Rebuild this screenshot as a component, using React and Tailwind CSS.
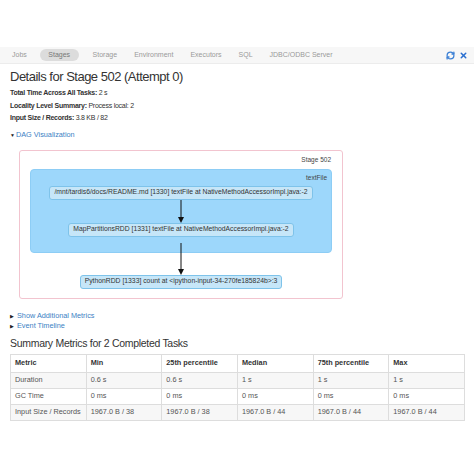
import { RefreshCw, X } from 'lucide-react';

const TABS = ['Jobs', 'Stages', 'Storage', 'Environment', 'Executors', 'SQL', 'JDBC/ODBC Server'];

const ROWS = [
  ['Duration', '0.6 s', '0.6 s', '1 s', '1 s', '1 s'],
  ['GC Time', '0 ms', '0 ms', '0 ms', '0 ms', '0 ms'],
  ['Input Size / Records', '1967.0 B / 38', '1967.0 B / 38', '1967.0 B / 44', '1967.0 B / 44', '1967.0 B / 44'],
];

const HEADERS = ['Metric', 'Min', '25th percentile', 'Median', '75th percentile', 'Max'];

function Arrow({ h }) {
  return (
    <svg width="8" height={h} className="block">
      <line x1="4" y1="0" x2="4" y2={h - 5} stroke="#111" strokeWidth="1" />
      <polygon points={`1,${h - 6} 7,${h - 6} 4,${h}`} fill="#111" />
    </svg>
  );
}

function Node({ children }) {
  return (
    <div className="h-[14px] px-[4px] flex items-center rounded-[3px] border border-[#7ec3ea] bg-[#c6e6f8] text-[6.8px] text-[#333] whitespace-nowrap">
      {children}
    </div>
  );
}

export default function App() {
  return (
    <div className="w-[474px] h-[474px] bg-white pt-[47px] text-[#333]" style={{ fontFamily: '"Liberation Sans", Arial, sans-serif' }}>
      <div className="h-[17px] bg-[#f7f7f7] border-b border-[#ececec] flex items-center pl-[12px] pr-[6px] text-[7px] text-[#9a9a9a]">
        {TABS.map((t) => (
          <span
            key={t}
            className={
              t === 'Stages'
                ? 'mr-[14px] px-[8.5px] py-[1px] rounded-full bg-[#dcdcdc] text-[#777]'
                : t === 'Jobs'
                ? 'mr-[13px]'
                : 'mr-[17px]'
            }
          >
            {t}
          </span>
        ))}
        <div className="ml-auto flex items-center gap-[4px]">
          <RefreshCw size={9} strokeWidth={3.5} color="#3a7fd5" />
          <X size={9} strokeWidth={4} color="#2a6fd0" />
        </div>
      </div>

      <div className="px-[10px]">
        <h3 className="mt-[4px] text-[13px] leading-[18px] tracking-[-0.5px] font-light text-[#333]">Details for Stage 502 (Attempt 0)</h3>
        <div className="mt-[1px] text-[7px] leading-[12.5px] tracking-[-0.25px]">
          <div><b>Total Time Across All Tasks:</b> 2 s</div>
          <div><b>Locality Level Summary:</b> Process local: 2</div>
          <div><b>Input Size / Records:</b> 3.8 KB / 82</div>
        </div>

        <div className="mt-[5px] text-[7.3px] leading-[10px] text-[#3b7fc4] flex items-center">
          <span className="text-[5px] mr-[1px] text-[#222]">▼</span>DAG Visualization
        </div>

        <div className="mt-[10px] ml-[9px] w-[324px] h-[149px] border border-[#f2c4cf] rounded-[3px] px-[10px] pt-[3px] flex flex-col">
          <div className="text-right text-[6.5px] text-[#444] leading-[12px] pr-[1px]">Stage 502</div>
          <div className="mt-[3px] h-[84px] rounded-[4px] bg-[#9dd7fb] border border-[#8dcdf5] flex flex-col items-center">
            <div className="self-end pr-[4px] pt-[3px] text-[6.5px] text-[#444] leading-[10px]">textFile</div>
            <div className="mt-[3px]">
              <Node>/mnt/tardis6/docs/README.md [1330] textFile at NativeMethodAccessorImpl.java:-2</Node>
            </div>
            <Arrow h={23} />
            <Node>MapPartitionsRDD [1331] textFile at NativeMethodAccessorImpl.java:-2</Node>
          </div>
          <div className="flex flex-col items-center -mt-[10px]">
            <Arrow h={32} />
            <Node>PythonRDD [1333] count at &lt;ipython-input-34-270fe185824b&gt;:3</Node>
          </div>
        </div>

        <div className="mt-[12px] text-[7.3px] text-[#3b7fc4] leading-[10px]">
          <div className="flex items-center"><span className="text-[5px] mr-[3px] text-[#222]">▶</span>Show Additional Metrics</div>
          <div className="flex items-center"><span className="text-[5px] mr-[3px] text-[#222]">▶</span>Event Timeline</div>
        </div>

        <h4 className="mt-[5px] text-[10.5px] leading-[14px] tracking-[-0.3px] font-light text-[#333]">Summary Metrics for 2 Completed Tasks</h4>

        <table className="mt-[4px] w-[455px] border-collapse text-[7.3px] table-fixed border border-[#dddddd]">
          <thead>
            <tr className="h-[18px]">
              {HEADERS.map((h) => (
                <th key={h} className="text-left font-bold px-[4px] border border-[#dddddd] text-[#333]">{h}</th>
              ))}
            </tr>
          </thead>
          <tbody>
            {ROWS.map((r, i) => (
              <tr key={r[0]} className={'h-[16px] ' + (i % 2 === 0 ? 'bg-[#f7f7f7]' : 'bg-white')}>
                {r.map((c, j) => (
                  <td key={j} className="px-[4px] border border-[#dddddd] text-[#555]">{c}</td>
                ))}
              </tr>
            ))}
          </tbody>
        </table>
      </div>
    </div>
  );
}
